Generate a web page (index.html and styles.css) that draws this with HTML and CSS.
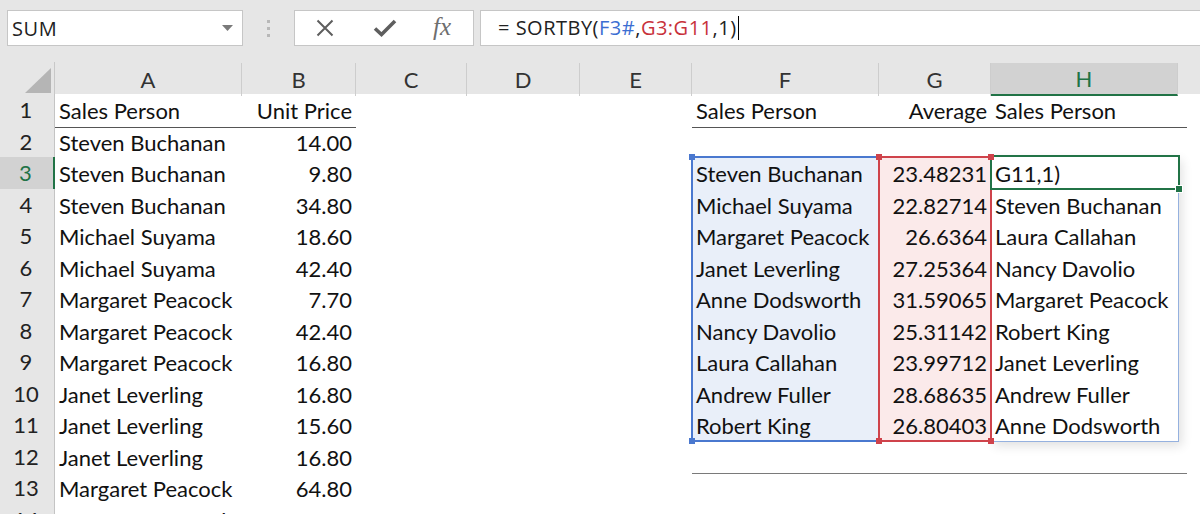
FILE: index.html
```html
<!DOCTYPE html>
<html lang="en">
<head>
<meta charset="utf-8">
<title>SORTBY</title>
<link rel="stylesheet" href="styles.css">
</head>
<body>
<div class="toolbar">
  <div class="namebox">
    <span class="name">SUM</span>
    <svg class="caret" width="11" height="6" viewBox="0 0 11 6"><polygon points="0,0 11,0 5.5,6" fill="#7a7a7a"/></svg>
  </div>
  <div class="grip"><i></i><i></i><i></i></div>
  <div class="fxbtns">
    <svg class="ico" width="20" height="20" viewBox="0 0 20 20"><path d="M2.5 2.5 L17.5 17.5 M17.5 2.5 L2.5 17.5" stroke="#5e5e5e" stroke-width="2" fill="none"/></svg>
    <svg class="ico" width="24" height="20" viewBox="0 0 24 20"><polyline points="2,10.5 8.5,16.5 22,3" stroke="#5e5e5e" stroke-width="3.6" fill="none" stroke-linejoin="miter"/></svg>
    <span class="fx">fx</span>
  </div>
  <div class="formula">= SORTBY(<span class="ref-blue">F3#</span>,<span class="ref-red">G3:G11</span>,1)<span class="caretline"></span></div>
</div>

<div class="sheet">
  <div class="range range-h"></div>
  <div class="range range-f"></div>
  <div class="range range-g"></div>
  <div class="active-cell"></div>
  <span class="handle h-blue h-f-top"></span>
  <span class="handle h-blue h-f-bot"></span>
  <span class="handle h-red h-g-tl"></span>
  <span class="handle h-red h-g-tr"></span>
  <span class="handle h-red h-g-bl"></span>
  <span class="handle h-red h-g-br"></span>
  <span class="handle h-green h-act"></span>

  <div class="row head">
    <div class="corner"><svg width="26" height="25" viewBox="0 0 26 25"><polygon points="26,0 26,25 0,25" fill="#b5b5b5"/></svg></div>
    <div class="ch">A</div><div class="ch">B</div><div class="ch">C</div><div class="ch">D</div><div class="ch">E</div><div class="ch">F</div><div class="ch">G</div><div class="ch sel">H</div><div class="ch last"></div>
  </div>

  <div class="row">
    <div class="rh">1</div>
    <div class="c ul">Sales Person</div><div class="c r ul">Unit Price</div><div class="c"></div><div class="c"></div><div class="c"></div>
    <div class="c ul">Sales Person</div><div class="c r ul">Average</div><div class="c ul ext">Sales Person</div><div class="c"></div>
  </div>
  <div class="row">
    <div class="rh">2</div>
    <div class="c">Steven Buchanan</div><div class="c r">14.00</div><div class="c"></div><div class="c"></div><div class="c"></div>
    <div class="c"></div><div class="c r"></div><div class="c"></div><div class="c"></div>
  </div>
  <div class="row">
    <div class="rh sel">3</div>
    <div class="c">Steven Buchanan</div><div class="c r">9.80</div><div class="c"></div><div class="c"></div><div class="c"></div>
    <div class="c">Steven Buchanan</div><div class="c r">23.48231</div><div class="c">G11,1)</div><div class="c"></div>
  </div>
  <div class="row">
    <div class="rh">4</div>
    <div class="c">Steven Buchanan</div><div class="c r">34.80</div><div class="c"></div><div class="c"></div><div class="c"></div>
    <div class="c">Michael Suyama</div><div class="c r">22.82714</div><div class="c">Steven Buchanan</div><div class="c"></div>
  </div>
  <div class="row">
    <div class="rh">5</div>
    <div class="c">Michael Suyama</div><div class="c r">18.60</div><div class="c"></div><div class="c"></div><div class="c"></div>
    <div class="c">Margaret Peacock</div><div class="c r">26.6364</div><div class="c">Laura Callahan</div><div class="c"></div>
  </div>
  <div class="row">
    <div class="rh">6</div>
    <div class="c">Michael Suyama</div><div class="c r">42.40</div><div class="c"></div><div class="c"></div><div class="c"></div>
    <div class="c">Janet Leverling</div><div class="c r">27.25364</div><div class="c">Nancy Davolio</div><div class="c"></div>
  </div>
  <div class="row">
    <div class="rh">7</div>
    <div class="c">Margaret Peacock</div><div class="c r">7.70</div><div class="c"></div><div class="c"></div><div class="c"></div>
    <div class="c">Anne Dodsworth</div><div class="c r">31.59065</div><div class="c">Margaret Peacock</div><div class="c"></div>
  </div>
  <div class="row">
    <div class="rh">8</div>
    <div class="c">Margaret Peacock</div><div class="c r">42.40</div><div class="c"></div><div class="c"></div><div class="c"></div>
    <div class="c">Nancy Davolio</div><div class="c r">25.31142</div><div class="c">Robert King</div><div class="c"></div>
  </div>
  <div class="row">
    <div class="rh">9</div>
    <div class="c">Margaret Peacock</div><div class="c r">16.80</div><div class="c"></div><div class="c"></div><div class="c"></div>
    <div class="c">Laura Callahan</div><div class="c r">23.99712</div><div class="c">Janet Leverling</div><div class="c"></div>
  </div>
  <div class="row">
    <div class="rh">10</div>
    <div class="c">Janet Leverling</div><div class="c r">16.80</div><div class="c"></div><div class="c"></div><div class="c"></div>
    <div class="c">Andrew Fuller</div><div class="c r">28.68635</div><div class="c">Andrew Fuller</div><div class="c"></div>
  </div>
  <div class="row">
    <div class="rh">11</div>
    <div class="c">Janet Leverling</div><div class="c r">15.60</div><div class="c"></div><div class="c"></div><div class="c"></div>
    <div class="c">Robert King</div><div class="c r">26.80403</div><div class="c">Anne Dodsworth</div><div class="c"></div>
  </div>
  <div class="row">
    <div class="rh">12</div>
    <div class="c">Janet Leverling</div><div class="c r">16.80</div><div class="c"></div><div class="c"></div><div class="c"></div>
    <div class="c ul2"></div><div class="c r ul2"></div><div class="c ul2 ext2"></div><div class="c"></div>
  </div>
  <div class="row">
    <div class="rh">13</div>
    <div class="c">Margaret Peacock</div><div class="c r">64.80</div><div class="c"></div><div class="c"></div><div class="c"></div>
    <div class="c"></div><div class="c r"></div><div class="c"></div><div class="c"></div>
  </div>
  <div class="row">
    <div class="rh">14</div>
    <div class="c">Margaret Peacock</div><div class="c r">9.00</div><div class="c"></div><div class="c"></div><div class="c"></div>
    <div class="c"></div><div class="c r"></div><div class="c"></div><div class="c"></div>
  </div>
</div>
</body>
</html>
```
FILE: styles.css
```css
html, body {
  margin: 0;
  padding: 0;
  width: 1200px;
  height: 514px;
  overflow: hidden;
  background: #ffffff;
}

.toolbar {
  height: 62px;
  box-sizing: border-box;
  padding-top: 10px;
  background: #e6e6e6;
  display: flex;
  align-items: flex-start;
  font-family: "Open Sans", "Noto Sans", sans-serif;
}

.namebox {
  margin-left: 7px;
  width: 236px;
  height: 36px;
  box-sizing: border-box;
  background: #fff;
  border: 1px solid #c6c6c6;
  display: flex;
  align-items: center;
  justify-content: space-between;
  padding: 0 9px 0 4px;
}

.name {
  font-size: 20px;
  letter-spacing: 0.6px;
  color: #222;
}

.grip {
  width: 51px;
  height: 36px;
  display: flex;
  flex-direction: column;
  align-items: center;
  justify-content: center;
  gap: 4px;
}

.grip i {
  display: block;
  width: 3px;
  height: 3px;
  background: #b8b8b8;
}

.fxbtns {
  width: 180px;
  height: 36px;
  box-sizing: border-box;
  background: #fff;
  border: 1px solid #c6c6c6;
  display: grid;
  grid-template-columns: 60px 60px 60px;
  align-items: center;
  justify-items: center;
}

.fx {
  font-family: "Liberation Serif", "DejaVu Serif", serif;
  font-style: italic;
  font-size: 25px;
  color: #6e6e6e;
  line-height: 1;
  margin-top: -3px;
  margin-right: 6px;
}

.formula {
  margin-left: 6px;
  flex: 1;
  height: 36px;
  box-sizing: border-box;
  background: #fff;
  border: 1px solid #c6c6c6;
  border-right: none;
  padding-left: 17px;
  font-size: 20px;
  letter-spacing: 0.5px;
  line-height: 34px;
  color: #222;
  display: flex;
  align-items: center;
  white-space: pre;
}

.ref-blue { color: #3c6ed2; }
.ref-red { color: #c8313a; }

.caretline {
  display: inline-block;
  width: 1px;
  height: 24px;
  background: #000;
  margin-left: 1px;
}

.sheet {
  position: relative;
  font-family: "Lato", "Liberation Sans", sans-serif;
  font-size: 22px;
  color: #111;
}

.row {
  position: relative;
  z-index: 1;
  display: grid;
  grid-template-columns: 55px 187px 114px 111px 113px 112px 187px 112px 187px 22px;
  height: 31.5px;
}

.row.head {
  height: 32px;
  background: #e6e6e6;
}

.corner {
  display: flex;
  align-items: flex-end;
  justify-content: flex-end;
  padding: 0 3px 3px 0;
  border-right: 1px solid #c8c8c8;
}

.ch {
  display: flex;
  align-items: center;
  justify-content: center;
  color: #333;
  border-right: 1px solid #cdcdcd;
  margin-top: 1px;
  line-height: 31px;
}

.ch.sel {
  background: #d2d2d2;
  color: #217346;
  border-bottom: 2px solid #217346;
  box-sizing: border-box;
}

.ch.last { border-right: none; }

.rh {
  background: #e6e6e6;
  color: #222;
  text-align: center;
  line-height: 32px;
  border-right: 1px solid #c4c4c4;
  border-bottom: 1px solid #cfcfcf;
  box-sizing: border-box;
  padding-right: 2px;
}

.rh.sel {
  background: #d2d2d2;
  color: #217346;
  border-right: 2px solid #217346;
}

.c {
  position: relative;
  white-space: nowrap;
  padding: 0 4px;
  line-height: 33px;
  box-sizing: border-box;
}

.c.r { text-align: right; }

.c.ul { border-bottom: 1px solid #555; }

.c.ul.ext::after {
  content: "";
  position: absolute;
  right: -9px;
  bottom: -1px;
  width: 9px;
  height: 1px;
  background: #555;
}

.c.ul2 { border-bottom: 1px solid #7a7a7a; }

.c.ul2.ext2::after {
  content: "";
  position: absolute;
  right: -9px;
  bottom: -1px;
  width: 9px;
  height: 1px;
  background: #7a7a7a;
}

.range {
  position: absolute;
  z-index: 0;
  box-sizing: border-box;
}

.range-f {
  left: 691px;
  top: 94px;
  width: 189px;
  height: 286px;
  border: 2px solid #4a78cf;
  background: #e9eff9;
}

.range-g {
  left: 878px;
  top: 94px;
  width: 114px;
  height: 286px;
  border: 2px solid #cf434b;
  background: #fbeaea;
}

.range-h {
  left: 991px;
  top: 94px;
  width: 188px;
  height: 286px;
  border: 1.5px solid #95b1df;
  background: #fff;
  box-shadow: 3px 4px 10px rgba(0, 0, 0, 0.12);
}

.active-cell {
  position: absolute;
  z-index: 2;
  left: 990px;
  top: 93px;
  width: 190px;
  height: 35px;
  box-sizing: border-box;
  border: 2px solid #217346;
}

.handle {
  position: absolute;
  z-index: 3;
  width: 6px;
  height: 6px;
}

.h-blue { background: #4a78cf; }
.h-red { background: #cf434b; }
.h-green { background: #217346; border: 1px solid #fff; width: 6px; height: 6px; }

.h-f-top { left: 689px; top: 92px; }
.h-f-bot { left: 689px; top: 376px; }
.h-g-tl { left: 876px; top: 92px; }
.h-g-tr { left: 988px; top: 92px; }
.h-g-bl { left: 876px; top: 376px; }
.h-g-br { left: 988px; top: 376px; }
.h-act { left: 1175px; top: 123px; }
```
